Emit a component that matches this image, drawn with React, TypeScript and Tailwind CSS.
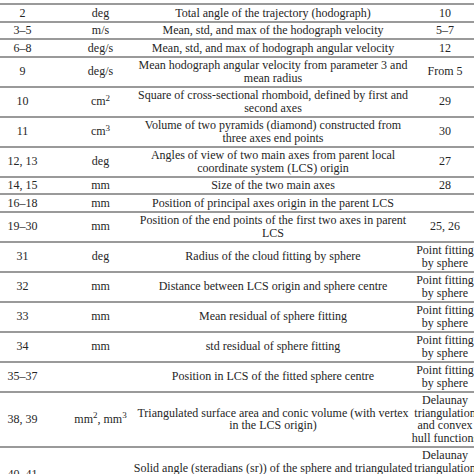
import React from "react";

type Row = {
  no: string;
  unit: React.ReactNode;
  desc: string[];
  src: string[];
};

const pointFit = ["Point fitting", "by sphere"];
const delaunay = ["Delaunay", "triangulation", "and convex", "hull functions"];

const rows: Row[] = [
  { no: "2", unit: "deg", desc: ["Total angle of the trajectory (hodograph)"], src: ["10"] },
  { no: "3–5", unit: "m/s", desc: ["Mean, std, and max of the hodograph velocity"], src: ["5–7"] },
  { no: "6–8", unit: "deg/s", desc: ["Mean, std, and max of hodograph angular velocity"], src: ["12"] },
  {
    no: "9",
    unit: "deg/s",
    desc: ["Mean hodograph angular velocity from parameter 3 and", "mean radius"],
    src: ["From 5"],
  },
  {
    no: "10",
    unit: (
      <>
        cm<sup>2</sup>
      </>
    ),
    desc: ["Square of cross-sectional rhomboid, defined by first and", "second axes"],
    src: ["29"],
  },
  {
    no: "11",
    unit: (
      <>
        cm<sup>3</sup>
      </>
    ),
    desc: ["Volume of two pyramids (diamond) constructed from", "three axes end points"],
    src: ["30"],
  },
  {
    no: "12, 13",
    unit: "deg",
    desc: ["Angles of view of two main axes from parent local", "coordinate system (LCS) origin"],
    src: ["27"],
  },
  { no: "14, 15", unit: "mm", desc: ["Size of the two main axes"], src: ["28"] },
  { no: "16–18", unit: "mm", desc: ["Position of principal axes origin in the parent LCS"], src: [] },
  {
    no: "19–30",
    unit: "mm",
    desc: ["Position of the end points of the first two axes in parent", "LCS"],
    src: ["25, 26"],
  },
  { no: "31", unit: "deg", desc: ["Radius of the cloud fitting by sphere"], src: pointFit },
  { no: "32", unit: "mm", desc: ["Distance between LCS origin and sphere centre"], src: pointFit },
  { no: "33", unit: "mm", desc: ["Mean residual of sphere fitting"], src: pointFit },
  { no: "34", unit: "mm", desc: ["std residual of sphere fitting"], src: pointFit },
  { no: "35–37", unit: "", desc: ["Position in LCS of the fitted sphere centre"], src: pointFit },
  {
    no: "38, 39",
    unit: (
      <>
        mm<sup>2</sup>, mm<sup>3</sup>
      </>
    ),
    desc: ["Triangulated surface area and conic volume (with vertex", "in the LCS origin)"],
    src: delaunay,
  },
  {
    no: "40, 41",
    unit: "",
    desc: ["Solid angle (steradians (sr)) of the sphere and triangulated", "surface"],
    src: delaunay,
  },
];

function Cell({ children }: { children: React.ReactNode }) {
  // unsafe centering on purpose: wide lines spill evenly on both sides
  return (
    <div className="flex flex-col items-center justify-center py-[1.5px] text-center whitespace-nowrap">
      {children}
    </div>
  );
}

function Lines({ lines }: { lines: string[] }) {
  return (
    <>
      {lines.map((l, i) => (
        <span key={i} className="block">
          {l}
        </span>
      ))}
    </>
  );
}

export default function App() {
  return (
    <div
      className="w-[474px] h-[474px] overflow-hidden bg-white pt-[3px] text-[#262626] text-[12px] leading-[12.5px]"
      style={{ fontFamily: '"Liberation Serif", "DejaVu Serif", serif' }}
    >
      <div className="w-[500px] border-t-2 border-[#9a9a9a]">
        {rows.map((r) => (
          <div
            key={r.no}
            className="grid grid-cols-[45px_111px_234px_110px] border-b-2 border-[#9a9a9a]"
          >
            <Cell>
              <span>{r.no}</span>
            </Cell>
            <Cell>
              <span>{r.unit}</span>
            </Cell>
            <Cell>
              <Lines lines={r.desc} />
            </Cell>
            <Cell>
              <Lines lines={r.src} />
            </Cell>
          </div>
        ))}
      </div>
    </div>
  );
}
